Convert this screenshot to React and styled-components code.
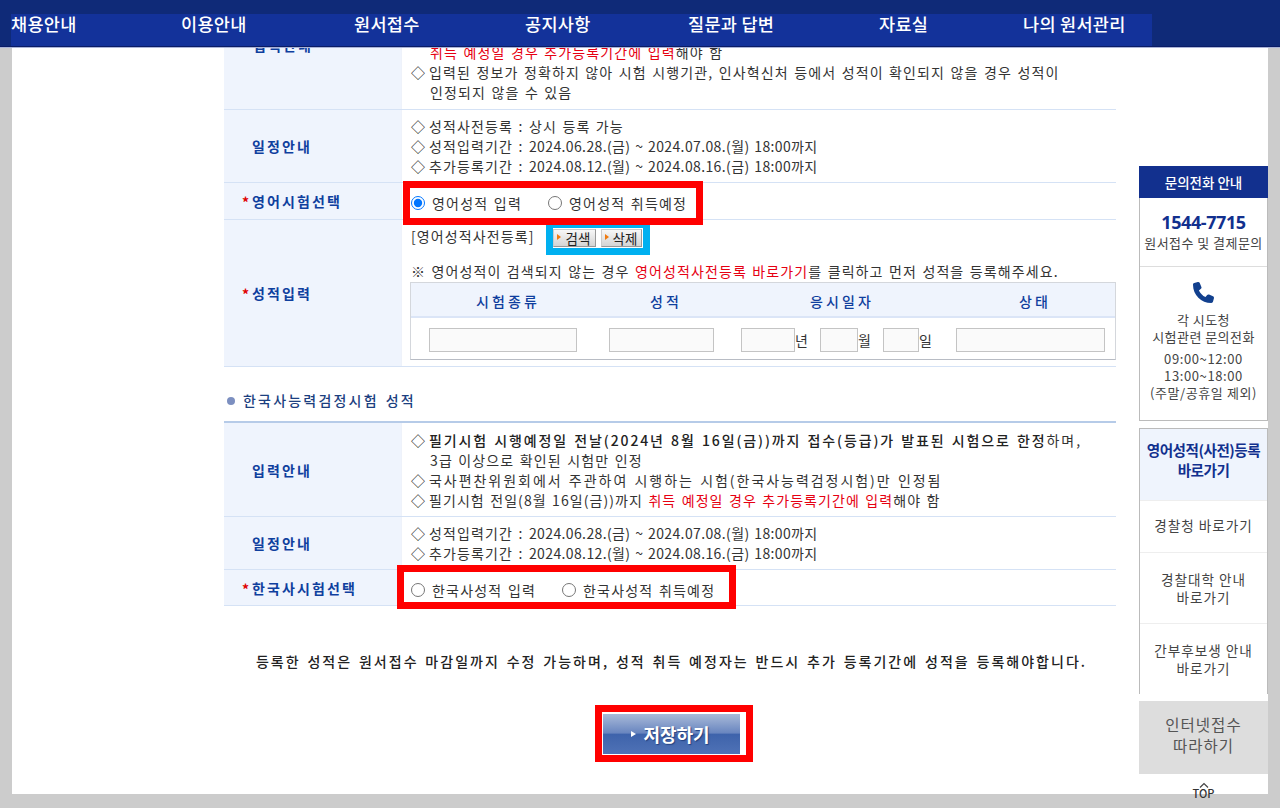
import React from 'react';
import styled, { createGlobalStyle } from 'styled-components';
import { FaPhone } from 'react-icons/fa6';

const NAV_ITEMS = [
  ['채용안내', 170],
  ['이용안내', 173],
  ['원서접수', 171],
  ['공지사항', 163],
  ['질문과 답변', 191],
  ['자료실', 144],
  ['나의 원서관리', 110],
];

const App = () => {
  return (
    <>
      <GlobalStyle />
      <Frame>
        <Header>
          <NavBar>
            {NAV_ITEMS.map(([name, width]) => (
              <NavItem key={name} $width={width}>{name}</NavItem>
            ))}
          </NavBar>
        </Header>

        <Content>
          <FormTable>
            <Row>
              <LabelCell $pushUp>입력안내</LabelCell>
              <ValueCell $top={60} $bottom={6}>
                <Line $indent><Red>취득 예정일 경우 추가등록기간에 입력</Red>해야 함</Line>
                <Line><Mark>◇</Mark>입력된 정보가 정확하지 않아 시험 시행기관, 인사혁신처 등에서 성적이 확인되지 않을 경우 성적이</Line>
                <Line $indent>인정되지 않을 수 있음</Line>
              </ValueCell>
            </Row>
            <Row>
              <LabelCell>일정안내</LabelCell>
              <ValueCell $top={7}>
                <Line><Mark>◇</Mark>성적사전등록 : 상시 등록 가능</Line>
                <Line><Mark>◇</Mark>성적입력기간 : <Dates>2024.06.28.(금) ~ 2024.07.08.(월) 18:00까지</Dates></Line>
                <Line><Mark>◇</Mark>추가등록기간 : <Dates>2024.08.12.(월) ~ 2024.08.16.(금) 18:00까지</Dates></Line>
              </ValueCell>
            </Row>
            <Row>
              <LabelCell $required>영어시험선택</LabelCell>
              <ValueCell $top={9} $height={36}>
                <RadioRow>
                  <RadioLabel $width={137}><input type="radio" name="eng" defaultChecked />영어성적 입력</RadioLabel>
                  <RadioLabel><input type="radio" name="eng" />영어성적 취득예정</RadioLabel>
                </RadioRow>
                <RedBox $left={1} $top={-2} $width={300} $height={44} />
              </ValueCell>
            </Row>
            <Row>
              <LabelCell $required>성적입력</LabelCell>
              <ValueCell $top={7} $height={146}>
                <Line>[영어성적사전등록]</Line>
                <SearchBox>
                  <SmallButton $width={43}>검색</SmallButton>
                  <SmallButton $width={41}>삭제</SmallButton>
                </SearchBox>
                <Note>※ 영어성적이 검색되지 않는 경우 <Red>영어성적사전등록 바로가기</Red>를 클릭하고 먼저 성적을 등록해주세요.</Note>
                <ScoreTable>
                  <ScoreHead>
                    <HeadCell $width={194}>시험종류</HeadCell>
                    <HeadCell $width={122}>성적</HeadCell>
                    <HeadCell $width={230}>응시일자</HeadCell>
                    <HeadCell $width={156}>상태</HeadCell>
                  </ScoreHead>
                  <ScoreBody>
                    <ScoreInput $width={148} $gap={32} />
                    <ScoreInput $width={105} $gap={27} />
                    <ScoreInput $width={54} />
                    <Unit $width={25}>년</Unit>
                    <ScoreInput $width={38} />
                    <Unit $width={25}>월</Unit>
                    <ScoreInput $width={36} />
                    <Unit $width={37}>일</Unit>
                    <ScoreInput $width={149} />
                  </ScoreBody>
                </ScoreTable>
              </ValueCell>
            </Row>
          </FormTable>

          <SectionTitle>한국사능력검정시험 성적</SectionTitle>

          <FormTable $strong>
            <Row>
              <LabelCell>입력안내</LabelCell>
              <ValueCell $top={8}>
                <Line $spread={1.88}><Mark>◇</Mark><strong>필기시험 시행예정일 전날(2024년 8월 16일(금))까지 접수(등급)가 발표된 시험으로 한정</strong>하며,</Line>
                <Line $indent>3급 이상으로 확인된 시험만 인정</Line>
                <Line $spread={1.96}><Mark>◇</Mark>국사편찬위원회에서 주관하여 시행하는 시험(한국사능력검정시험)만 인정됨</Line>
                <Line $spread={1.07}><Mark>◇</Mark>필기시험 전일(8월 16일(금))까지 <Red>취득 예정일 경우 추가등록기간에 입력</Red>해야 함</Line>
              </ValueCell>
            </Row>
            <Row>
              <LabelCell>일정안내</LabelCell>
              <ValueCell $top={7}>
                <Line><Mark>◇</Mark>성적입력기간 : <Dates>2024.06.28.(금) ~ 2024.07.08.(월) 18:00까지</Dates></Line>
                <Line><Mark>◇</Mark>추가등록기간 : <Dates>2024.08.12.(월) ~ 2024.08.16.(금) 18:00까지</Dates></Line>
              </ValueCell>
            </Row>
            <Row>
              <LabelCell $required>한국사시험선택</LabelCell>
              <ValueCell $top={9} $height={35}>
                <RadioRow>
                  <RadioLabel $width={151}><input type="radio" name="his" />한국사성적 입력</RadioLabel>
                  <RadioLabel><input type="radio" name="his" />한국사성적 취득예정</RadioLabel>
                </RadioRow>
                <RedBox $left={-5} $top={-5} $width={339} $height={44} />
              </ValueCell>
            </Row>
          </FormTable>

          <Notice>등록한 성적은 원서접수 마감일까지 수정 가능하며, 성적 취득 예정자는 반드시 추가 등록기간에 성적을 등록해야합니다.</Notice>

          <SaveWrap>
            <SaveButton>저장하기</SaveButton>
          </SaveWrap>
        </Content>

        <Side>
          <SideTitle>문의전화 안내</SideTitle>
          <PhoneBox>
            <PhoneTop>
              <BigNumber>1544-7715</BigNumber>
              <SideText>원서접수 및 결제문의</SideText>
            </PhoneTop>
            <PhoneBottom>
              <FaPhone />
              <SideText>각 시도청<br />시험관련 문의전화</SideText>
              <Hours>09:00~12:00<br />13:00~18:00<br />(주말/공휴일 제외)</Hours>
            </PhoneBottom>
          </PhoneBox>
          <LinkBox>
            <LinkItem $active $height={72}>영어성적(사전)등록<br />바로가기</LinkItem>
            <LinkItem $height={52}>경찰청 바로가기</LinkItem>
            <LinkItem $height={71}>경찰대학 안내<br />바로가기</LinkItem>
            <LinkItem $height={70}>간부후보생 안내<br />바로가기</LinkItem>
          </LinkBox>
          <FollowBox>인터넷접수<br />따라하기</FollowBox>
          <TopLink>
            <svg width="12" height="6" viewBox="0 0 12 6"><path d="M2 5.5 L6 1.5 L10 5.5" fill="none" stroke="#444" strokeWidth="1.2" /></svg>
            TOP
          </TopLink>
        </Side>
      </Frame>
    </>
  );
};

export default App;

const GlobalStyle = createGlobalStyle`
  html, body {
    margin: 0;
    height: 808px;
    overflow: hidden;
    background: #cccccc;
    font-family: "Noto Sans CJK KR", "Noto Sans", sans-serif;
    font-size: 14px;
    color: #333;
  }
`
const Frame = styled.div`
  position: relative;
  display: flex;
  align-items: flex-start;
  width: 1256px;
  height: 794px;
  margin-left: 12px;
  background: #fff;
`
const Header = styled.header`
  position: absolute;
  top: 0;
  left: -12px;
  z-index: 5;
  width: 1280px;
  height: 47px;
  padding-top: 14px;
  box-sizing: border-box;
  background: #0f2a78;
  border-bottom: 1px solid #0a1c66;
  box-shadow: 0 1px 0 #aab4d8;
`
const NavBar = styled.nav`
  display: flex;
  width: 1141px;
  height: 32px;
  margin-left: 11px;
  background: #13329a;
`
const NavItem = styled.a`
  flex: none;
  width: ${p => p.$width}px;
  font-size: 17.5px;
  font-weight: 500;
  line-height: 20px;
  color: #fff;
  white-space: nowrap;
  letter-spacing: 0.3px;
`
const Content = styled.main`
  flex: none;
  width: 892px;
  margin: -17px 0 0 212px;
`
const FormTable = styled.div`
  border-top: ${p => (p.$strong ? '2px solid #b6cbe8' : 'none')};
`
const Row = styled.div`
  display: flex;
  border-bottom: 1px solid #d5e2f5;
`
const LabelCell = styled.div`
  position: relative;
  display: flex;
  align-items: center;
  flex: none;
  box-sizing: border-box;
  width: 177px;
  padding: ${p => (p.$pushUp ? '0 0 3px 29px' : '0 0 0 28px')};
  background: #eff4fd;
  color: #0f3f9e;
  font-size: 14px;
  font-weight: 700;
  letter-spacing: 2.1px;
  white-space: nowrap;
  ${p => p.$required && `
    &::before {
      content: '*';
      position: absolute;
      left: 18px;
      top: 50%;
      margin-top: -9px;
      color: #e00000;
      font-size: 14px;
    }
  `}
`
const ValueCell = styled.div`
  position: relative;
  flex: 1;
  box-sizing: border-box;
  height: ${p => (p.$height ? `${p.$height}px` : 'auto')};
  padding: ${p => p.$top}px 0 ${p => p.$bottom || 5}px 9px;
  background: #fff;
  border-left: 1px solid #eef2fa;
`
const Line = styled.div`
  height: 20px;
  line-height: 18px;
  padding-left: ${p => (p.$indent ? '19px' : '0')};
  white-space: nowrap;
  letter-spacing: ${p => p.$spread || 1.12}px;
  word-spacing: 1.2px;
  strong { font-weight: 500; color: #222; }
`
const Mark = styled.span`
  display: inline-block;
  width: 18px;
  letter-spacing: 0;
  color: #222;
`
const Dates = styled.span`
  letter-spacing: 0.38px;
`
const Red = styled.span`
  color: #e60012;
`
const RadioRow = styled.div`
  display: flex;
  align-items: center;
  height: 22px;
`
const RadioLabel = styled.label`
  display: flex;
  align-items: center;
  flex: none;
  width: ${p => (p.$width ? `${p.$width}px` : 'auto')};
  white-space: nowrap;
  letter-spacing: 1.2px;
  word-spacing: 1.2px;
  input {
    width: 14px;
    height: 14px;
    margin: 0 7px 0 0;
    flex: none;
  }
`
const RedBox = styled.div`
  position: absolute;
  left: ${p => p.$left}px;
  top: ${p => p.$top}px;
  z-index: 2;
  box-sizing: border-box;
  width: ${p => p.$width}px;
  height: ${p => p.$height}px;
  border: 7px solid #ff0000;
  pointer-events: none;
`
const SearchBox = styled.div`
  position: absolute;
  left: 144px;
  top: 1px;
  display: flex;
  gap: 5px;
  box-sizing: border-box;
  width: 104px;
  height: 34px;
  padding: 8px 7px;
  background: #fff;
  outline: 7px solid #00b0f0;
  outline-offset: -7px;
`
const SmallButton = styled.button`
  position: relative;
  flex: none;
  box-sizing: border-box;
  width: ${p => p.$width}px;
  height: 18px;
  padding: 0 0 0 7px;
  border: 1px solid #ccc;
  border-right-color: #999;
  border-bottom-color: #999;
  background: linear-gradient(#f7f7f7, #d4d4d4);
  color: #222;
  font-family: inherit;
  font-size: 13.5px;
  line-height: 16px;
  &::before {
    content: '';
    position: absolute;
    left: 3px;
    top: 4px;
    border-left: 4px solid #f07a10;
    border-top: 3px solid transparent;
    border-bottom: 3px solid transparent;
  }
`
const Note = styled.div`
  height: 20px;
  margin-top: 14px;
  line-height: 20px;
  white-space: nowrap;
  letter-spacing: 1.1px;
  word-spacing: 1.2px;
`
const ScoreTable = styled.div`
  box-sizing: border-box;
  width: 706px;
  height: 78px;
  margin: 1px 0 0 -1px;
  border: 1px solid #d4d7dc;
  border-bottom-color: #b8bcc4;
`
const ScoreHead = styled.div`
  display: flex;
  height: 35px;
  background: #eff4fd;
  border-bottom: 2px solid #dbe5f7;
  box-sizing: border-box;
`
const HeadCell = styled.div`
  flex: none;
  width: ${p => p.$width}px;
  line-height: 36px;
  text-align: center;
  color: #0f3f9e;
  font-weight: 500;
  letter-spacing: 3.1px;
`
const ScoreBody = styled.div`
  display: flex;
  align-items: center;
  box-sizing: border-box;
  height: 41px;
  padding: 2px 0 0 18px;
`
const ScoreInput = styled.input`
  flex: none;
  box-sizing: border-box;
  width: ${p => p.$width}px;
  height: 24px;
  margin: 0 ${p => p.$gap || 0}px 0 0;
  padding: 0;
  background: #fafafa;
  border: 1px solid #c4c4c4;
`
const Unit = styled.span`
  flex: none;
  width: ${p => p.$width}px;
`
const SectionTitle = styled.h3`
  position: relative;
  height: 54px;
  margin: 0;
  padding-left: 19px;
  line-height: 66px;
  color: #1c3f7f;
  font-size: 14px;
  font-weight: 500;
  letter-spacing: 2.2px;
  word-spacing: 1.6px;
  white-space: nowrap;
  &::before {
    content: '';
    position: absolute;
    left: 3px;
    top: 30px;
    width: 8px;
    height: 8px;
    border-radius: 50%;
    background: #7c8fc0;
  }
`
const Notice = styled.p`
  margin: 45px 0 0;
  padding-left: 3px;
  text-align: center;
  line-height: 20px;
  white-space: nowrap;
  color: #222;
  font-weight: 500;
  letter-spacing: 2.03px;
  word-spacing: 1.6px;
`
const SaveWrap = styled.div`
  display: inline-block;
  box-sizing: border-box;
  width: 158px;
  height: 57px;
  margin: 34px 0 0 371px;
  padding: 2px 5px 1px 1px;
  border: 7px solid #ff0000;
  background: #fff;
`
const SaveButton = styled.button`
  position: relative;
  display: block;
  width: 137px;
  height: 40px;
  padding: 0 0 0 10px;
  border: none;
  background: linear-gradient(#a9bad9 0%, #6885bf 48%, #3e63ab 50%, #4f72b6 100%);
  color: #fff;
  font-family: inherit;
  font-size: 18px;
  font-weight: 700;
  text-shadow: 1px 1px 1px #23407f;
  &::before {
    content: '';
    position: absolute;
    left: 28px;
    top: 17px;
    border-left: 5px solid #fff;
    border-top: 3.5px solid transparent;
    border-bottom: 3.5px solid transparent;
  }
`
const Side = styled.aside`
  flex: none;
  width: 129px;
  margin: 166px 0 0 23px;
  text-align: center;
  color: #444;
`
const SideTitle = styled.div`
  height: 32px;
  line-height: 32px;
  background: #12308e;
  color: #fff;
  font-size: 13.5px;
  font-weight: 500;
`
const PhoneBox = styled.div`
  box-sizing: border-box;
  height: 223px;
  border: 1px solid #bbb;
  border-top: none;
`
const PhoneTop = styled.div`
  box-sizing: border-box;
  height: 69px;
  padding-top: 13px;
  border-bottom: 1px solid #ddd;
`
const BigNumber = styled.div`
  height: 23px;
  line-height: 23px;
  color: #12308e;
  font-family: "Open Sans", sans-serif;
  font-size: 18px;
  font-weight: 700;
  letter-spacing: -0.4px;
`
const SideText = styled.div`
  line-height: 17px;
  font-size: 13px;
  letter-spacing: 0.45px;
  white-space: nowrap;
`
const PhoneBottom = styled.div`
  padding-top: 15px;
  svg {
    display: block;
    width: 21px;
    height: 21px;
    margin: 0 auto 8px;
    color: #12408e;
  }
`
const Hours = styled.div`
  margin-top: 5px;
  line-height: 17px;
  font-size: 13px;
  letter-spacing: 0.6px;
  white-space: nowrap;
`
const LinkBox = styled.div`
  box-sizing: border-box;
  height: 266px;
  margin-top: 7px;
  border: 1px solid #bbb;
`
const LinkItem = styled.a`
  display: flex;
  align-items: center;
  justify-content: center;
  box-sizing: border-box;
  height: ${p => p.$height}px;
  padding-bottom: ${p => (p.$active ? '9px' : p.$height === 52 ? '4px' : '0')};
  line-height: ${p => (p.$active ? '20px' : '18px')};
  font-size: ${p => (p.$active ? '14.6px' : '13.6px')};
  text-align: center;
  white-space: nowrap;
  background: ${p => (p.$active ? '#eff4fd' : '#fff')};
  color: ${p => (p.$active ? '#12308e' : '#444')};
  font-weight: ${p => (p.$active ? 700 : 400)};
  letter-spacing: ${p => (p.$active ? '-0.5px' : '1px')};
  border-bottom: 1px solid #eee;
  &:last-child { border-bottom: none; }
`
const FollowBox = styled.div`
  display: flex;
  align-items: center;
  justify-content: center;
  box-sizing: border-box;
  height: 73px;
  margin-top: 7px;
  padding-bottom: 5px;
  background: #dddddd;
  color: #555;
  font-size: 15.5px;
  letter-spacing: 1px;
  line-height: 21px;
  text-align: center;
`
const TopLink = styled.a`
  display: block;
  margin-top: 8px;
  color: #333;
  font-size: 11px;
  font-weight: 500;
  line-height: 11px;
  svg { display: block; margin: 0 auto; }
`
